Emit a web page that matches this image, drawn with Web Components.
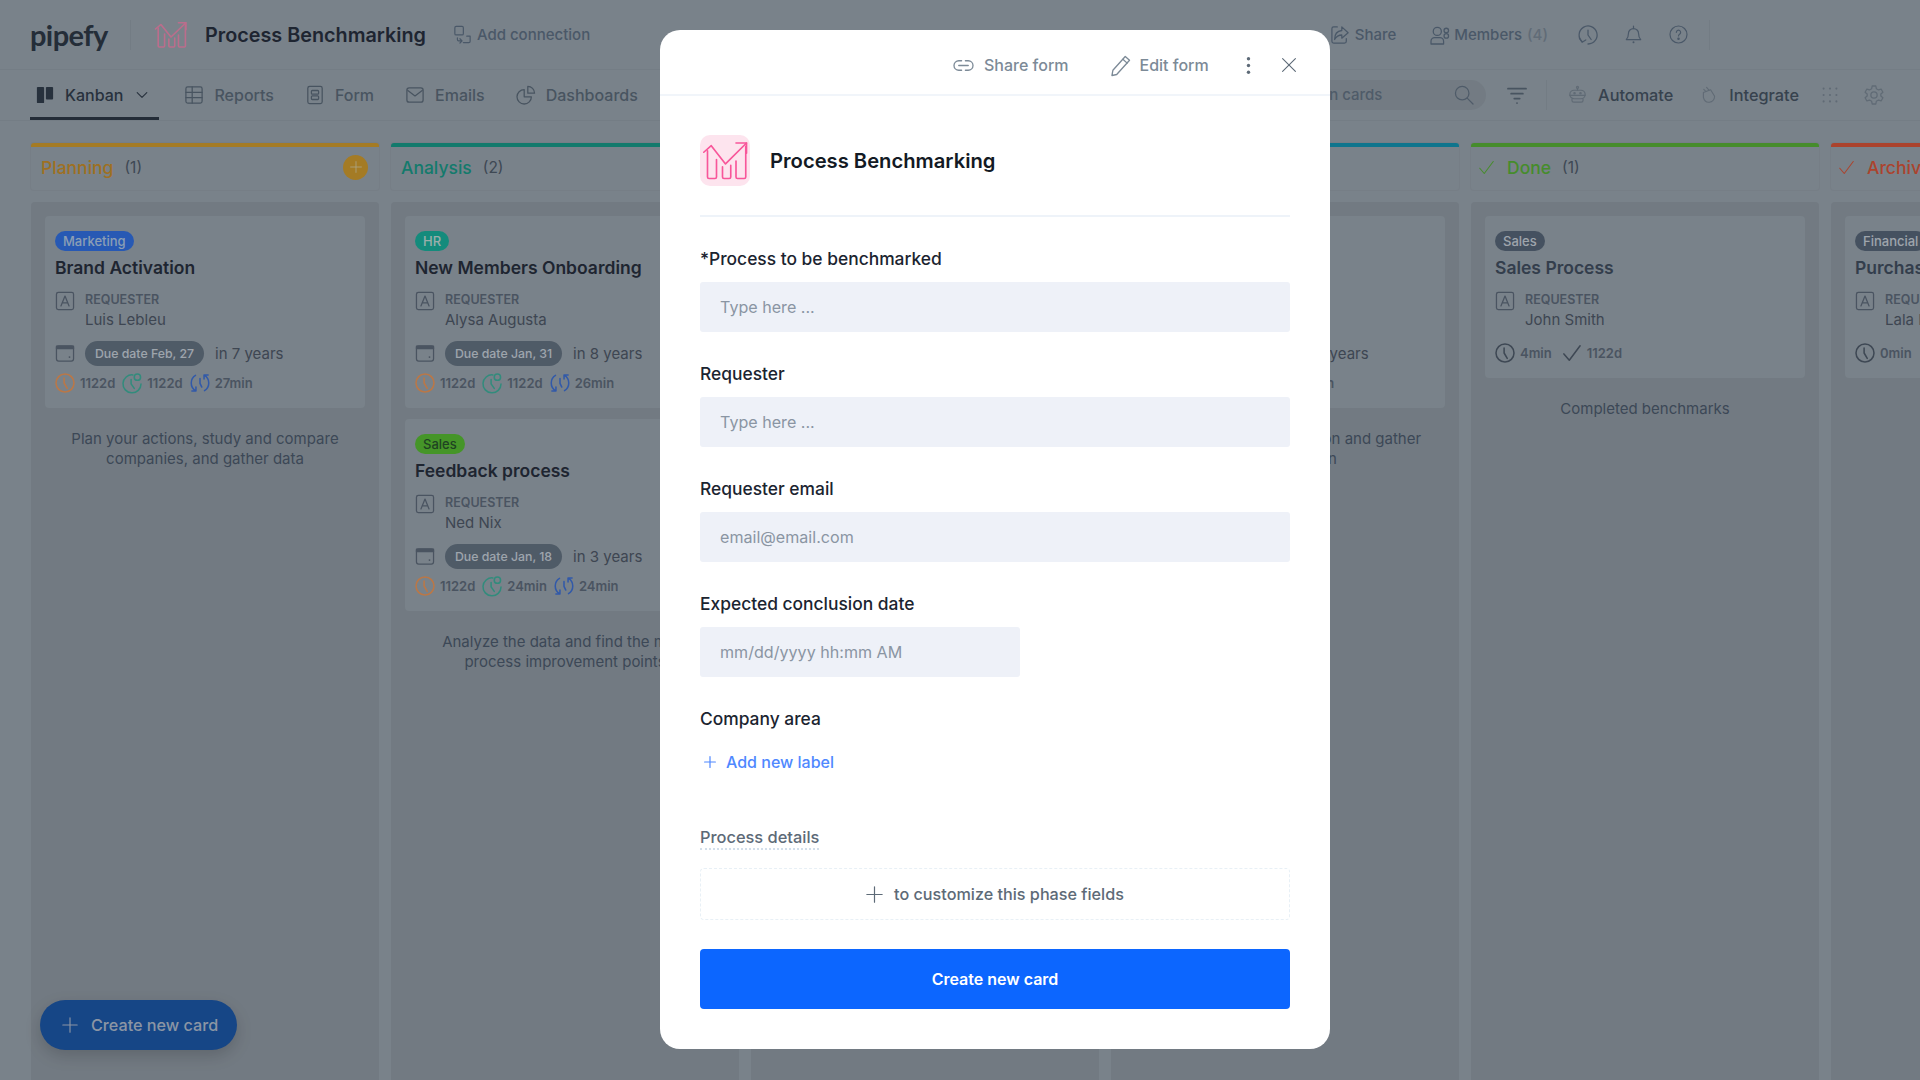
<!DOCTYPE html>
<html lang="en">
<head>
<meta charset="utf-8">
<title>Process Benchmarking</title>
<style>
  html, body { margin: 0; height: 100%; overflow: hidden; }
  body { background: #a1a9b0; font-family: Inter, "Noto Sans", sans-serif; color: #1b1f29; }
</style>
</head>
<body>
<pf-app>
  <pf-topbar></pf-topbar>
  <pf-tabs></pf-tabs>
  <pf-board>
    <pf-column name="Planning" count="1" color="#dea020" ink="#d6901a" add desc="Plan your actions, study and compare companies, and gather data">
      <pf-card tag="Marketing" tag-bg="#2c6fec" tag-fg="#bbd2ee" title="Brand Activation" person="Luis Lebleu" due="Due date Feb, 27" rel="in 7 years">
        <pf-metric icon="clock" color="#ff9a4f">1122d</pf-metric>
        <pf-metric icon="clock-dot" color="#3bb79d">1122d</pf-metric>
        <pf-metric icon="cycle" color="#3a6fdd">27min</pf-metric>
      </pf-card>
    </pf-column>
    <pf-column name="Analysis" count="2" color="#0f9e86" desc="Analyze the data and find the main process improvement points">
      <pf-card tag="HR" tag-bg="#10b79d" tag-fg="#d0e8e0" title="New Members Onboarding" person="Alysa Augusta" due="Due date Jan, 31" rel="in 8 years">
        <pf-metric icon="clock" color="#ff9a4f">1122d</pf-metric>
        <pf-metric icon="clock-dot" color="#3bb79d">1122d</pf-metric>
        <pf-metric icon="cycle" color="#3a6fdd">26min</pf-metric>
      </pf-card>
      <pf-card tag="Sales" tag-bg="#57c524" tag-fg="#1f4f1c" title="Feedback process" person="Ned Nix" due="Due date Jan, 18" rel="in 3 years">
        <pf-metric icon="clock" color="#ff9a4f">1122d</pf-metric>
        <pf-metric icon="clock-dot" color="#3bb79d">24min</pf-metric>
        <pf-metric icon="cycle" color="#3a6fdd">24min</pf-metric>
      </pf-card>
    </pf-column>
    <pf-column name="Benchmarking" count="1" color="#0a97b5" desc="Compare the results with the market">
      <pf-card tag="Sales" tag-bg="#57c524" tag-fg="#1f4f1c" title="Sales review" person="Ned Nix" due="Due date Jan, 18" rel="in 3 years">
        <pf-metric icon="clock" color="#ff9a4f">1122d</pf-metric>
      </pf-card>
    </pf-column>
    <pf-column name="Execution" count="1" color="#0a97b5" desc="Evaluate all the information and gather<br>the conclusion">
      <pf-card tag="Sales" tag-bg="#57c524" tag-fg="#1f4f1c" title="Customer support" person="Ned Nix" due="Due date Jan, 18" rel="in 10 years">
        <pf-metric icon="clock" color="#ff9a4f">1122d</pf-metric>
        <pf-metric icon="clock-dot" color="#3bb79d">1122d</pf-metric>
        <pf-metric icon="cycle" color="#3a6fdd">24min</pf-metric>
      </pf-card>
    </pf-column>
    <pf-column name="Done" count="1" color="#58b82a" done desc="Completed benchmarks">
      <pf-card tag="Sales" tag-bg="#576474" tag-fg="#d6dbe1" title="Sales Process" person="John Smith" muted>
        <pf-metric icon="clock" color="#4c5663">4min</pf-metric>
        <pf-metric icon="check" color="#4c5663" style="margin-left:3px">1122d</pf-metric>
      </pf-card>
    </pf-column>
    <pf-column name="Archived" count="1" color="#e8502c" done desc="Archived benchmarks">
      <pf-card tag="Financial" tag-bg="#576474" tag-fg="#d6dbe1" title="Purchase Process" person="Lala Lima" muted>
        <pf-metric icon="clock" color="#4c5663">0min</pf-metric>
      </pf-card>
    </pf-column>
  </pf-board>
  <pf-fab>Create new card</pf-fab>
</pf-app>

<pf-modal>
  <pf-field label="*Process to be benchmarked" placeholder="Type here ..."></pf-field>
  <pf-field label="Requester" placeholder="Type here ..."></pf-field>
  <pf-field label="Requester email" placeholder="email@email.com"></pf-field>
  <pf-field label="Expected conclusion date" placeholder="mm/dd/yyyy hh:mm AM" narrow></pf-field>
</pf-modal>

<script>
// --- Icons: one table, every shadow root draws from it ---
const ICONS = {
  kanban: '<rect x="3" y="3" width="8" height="18" rx="1" fill="currentColor" stroke="none"/><rect x="13" y="3" width="8" height="14" rx="1" fill="currentColor" stroke="none"/>',
  table: '<rect x="3" y="3" width="18" height="18" rx="2"/><path d="M3 9h18M3 15h18M10 3v18"/>',
  form: '<rect x="4" y="2.5" width="16" height="19" rx="2"/><rect x="8" y="7" width="8" height="4" rx="1"/><rect x="8" y="13" width="8" height="4" rx="1"/>',
  mail: '<rect x="3" y="4" width="18" height="16" rx="2.5"/><path d="M4 7l8 6 8-6"/>',
  pie: '<path d="M10 6a8 8 0 1 0 8 8h-8z"/><path d="M14 2.5a7.500 7.500 0 0 1 7.500 7.500H14z"/>',
  chevron: '<path d="M6 9l6 6 6-6"/>',
  connect: '<rect x="3" y="2.5" width="10" height="10" rx="1.5"/><path d="M21 14v6a1.5 1.5 0 0 1-1.5 1.5H13M17 14h4M6 16v2a1.5 1.5 0 0 0 1.5 1.5H11M9 17l2.500 2.500L9 22"/>',
  share: '<path d="M9 3H5a2 2 0 0 0-2 2v14a2 2 0 0 0 2 2h12a2 2 0 0 0 2-2v-3"/><path d="M14 3l7 6.500-7 6V12c-4 0-6 1.500-8 5 0-6 3-9.500 8-10z"/>',
  members: '<circle cx="9" cy="8" r="4.500"/><path d="M2 22v-3a4 4 0 0 1 4-4h6a4 4 0 0 1 4 4v3z"/><circle cx="19" cy="7" r="2.500"/><circle cx="19" cy="13" r="2.500"/>',
  history: '<path d="M5.500 19.500A10 10 0 1 1 12 22"/><path d="M12 6.500V12l3.500 5M2.500 15.500l3 4.500 4-2.500"/>',
  bell: '<path d="M3.500 18c2-2 2.500-4 2.500-7a6 6 0 0 1 12 0c0 3 .5 5 2.500 7z"/><path d="M12 2v3"/><circle cx="12" cy="21" r="1.200" fill="currentColor" stroke="none"/>',
  help: '<circle cx="12" cy="12" r="10"/><path d="M9.500 9.500a2.500 2.500 0 1 1 3.800 2.100c-.9.600-1.300 1-1.300 2.100"/><circle cx="12" cy="17" r=".8" fill="currentColor"/>',
  search: '<circle cx="10" cy="10" r="7.500"/><path d="M15.500 15.500L22 22"/>',
  filter: '<path d="M2 5h20M5.500 10.500h13M9 16h6" stroke-width="2"/><circle cx="12" cy="21" r="1" fill="currentColor" stroke="none"/>',
  robot: '<circle cx="12" cy="3.500" r="1.200"/><path d="M12 4.700V7"/><rect x="3" y="7" width="18" height="10" rx="5"/><path d="M3 13h18"/><path d="M5.500 17.500v1.500a2 2 0 0 0 2 2h9a2 2 0 0 0 2-2v-1.500"/><circle cx="8.500" cy="10.500" r=".8" fill="currentColor"/><circle cx="15.500" cy="10.500" r=".8" fill="currentColor"/>',
  plug: '<path d="M9 2.500l3 3.500"/><path d="M5 9l9-3.500 5 8c0 4-3 7-6.500 7.500S6 19 5 15z"/><path d="M5.500 5l2.500 2.500"/>',
  grid: '<g fill="currentColor" stroke="none"><circle cx="4" cy="4" r="1.300"/><circle cx="12" cy="4" r="1.300"/><circle cx="20" cy="4" r="1.300"/><circle cx="4" cy="12" r="1.300"/><circle cx="12" cy="12" r="1.300"/><circle cx="20" cy="12" r="1.300"/><circle cx="4" cy="20" r="1.300"/><circle cx="12" cy="20" r="1.300"/><circle cx="20" cy="20" r="1.300"/></g>',
  gear: '<circle cx="12" cy="12" r="3.500"/><path d="M10 2h4l.6 3 2.400 1.400 2.900-1 2 3.500-2.300 2v2.200l2.300 2-2 3.500-2.900-1L14.600 19l-.6 3h-4l-.6-3L7 17.600l-2.900 1-2-3.500 2.300-2v-2.200l-2.300-2 2-3.500 2.900 1L9.400 5z"/>',
  plus: '<path d="M12 3v18M3 12h18"/>',
  check: '<path d="M3 13l6 7L21 4"/>',
  letter: '<rect x="2.500" y="2.500" width="19" height="19" rx="2"/><path d="M7.500 17.500L12 6.500l4.500 11M9 14h6"/>',
  calendar: '<rect x="2.500" y="4" width="19" height="17" rx="2.500"/><path d="M2.500 4.500h19V7h-19z" fill="currentColor"/><circle cx="17" cy="16.500" r="1" fill="currentColor" stroke="none"/>',
  clock: '<circle cx="12" cy="12" r="10"/><path d="M11 6.500V12l3.500 6"/>',
  'clock-dot': '<path d="M13 3A10 10 0 1 0 22 13"/><circle cx="18" cy="5.500" r="3.500"/><path d="M11 8v5l3.500 5"/>',
  cycle: '<path d="M7 3.500A10 10 0 0 0 7 20.500M3 21h4.500v-4.500"/><path d="M17 20.500A10 10 0 0 0 17 3.500M21 3h-4.500v4.500"/><path d="M12 7v5.500l2 4"/>',
  link: '<path d="M10 7H7a5 5 0 0 0 0 10h3M14 7h3a5 5 0 0 1 0 10h-3M7 12h10"/>',
  pencil: '<path d="M17 2.500l4.500 4L8 21.500 3 22.500l1-5.500z"/><path d="M14.500 5.500l4.500 4"/>',
  dots: '<g fill="currentColor" stroke="none"><circle cx="12" cy="4" r="2"/><circle cx="12" cy="12" r="2"/><circle cx="12" cy="20" r="2"/></g>',
  close: '<path d="M4 4l16 16M20 4L4 20"/>',
  benchmark: '<path d="M.5 7L5.500 2.500 15 15 29 .7"/><path d="M22 .7h7v7"/><path d="M3 6v18a1 1 0 0 0 1 1h4a1 1 0 0 0 1-1V12M13 17v7a1 1 0 0 0 1 1h3.500a1 1 0 0 0 1-1v-8M22 13v11a1 1 0 0 0 1 1h4.500a1 1 0 0 0 1-1V3"/>'
};

// --- Component: inline svg icon, picked by name ---
class PfIcon extends HTMLElement {
  connectedCallback() {
    const size = this.getAttribute('size') || 18;
    const height = this.getAttribute('height') || size;
    const stroke = this.getAttribute('stroke') || 1.4;
    const view = this.getAttribute('view') || '2 2 20 20';
    const name = this.getAttribute('name');
    this.attachShadow({ mode: 'open' }).innerHTML = `
      <style>:host { display: inline-flex; flex: none; line-height: 0; } svg { display: block; overflow: visible; }</style>
      <svg width="${size}" height="${height}" viewBox="${view}" preserveAspectRatio="none" fill="none" stroke="currentColor"
           stroke-width="${stroke}" stroke-linecap="round" stroke-linejoin="round">${ICONS[name] || ''}</svg>`;
  }
}
customElements.define('pf-icon', PfIcon);

// --- Component: page frame ---
class PfApp extends HTMLElement {
  constructor() {
    super();
    this.attachShadow({ mode: 'open' }).innerHTML = `
      <style>
        :host { display: flex; flex-direction: column; height: 1080px; width: 1920px; overflow: hidden; position: relative; }
      </style>
      <slot></slot>`;
  }
}
customElements.define('pf-app', PfApp);

// --- Component: top bar with logo and pipe name ---
class PfTopbar extends HTMLElement {
  constructor() {
    super();
    this.attachShadow({ mode: 'open' }).innerHTML = `
      <style>
        :host { display: flex; align-items: center; height: 70px; flex: none; box-sizing: border-box; padding: 0 30px; border-bottom: 1px solid #9aa2a9; color: #5e6e80; font-size: 15px; font-weight: 500; }
        .logo { font: 700 29px/1 Lato, Inter, sans-serif; letter-spacing: -.6px; color: #27303c; width: 78px; }
        .sep { width: 1px; height: 30px; background: #99a1a8; margin: 0 24px 0 22px; }
        h1 { margin: 0 0 0 18px; font-size: 19.8px; line-height: 26px; font-weight: 600; color: #1f2531; white-space: nowrap; }
        .item { display: flex; align-items: center; gap: 6px; white-space: nowrap; }
        .add { margin-left: 28px; }
        .right { margin-left: auto; display: flex; align-items: center; }
        .count { color: #7e8a96; }
        .sep2 { width: 1px; height: 30px; background: #99a1a8; margin-left: 22px; margin-right: 180px; }
        .bench { color: #ff8cb3; }
      </style>
      <span class="logo">pipefy</span>
      <span class="sep"></span>
      <pf-icon class="bench" name="benchmark" view="0 0 30 26" size="32" height="26" stroke="1.500"></pf-icon>
      <h1>Process Benchmarking</h1>
      <span class="item add"><pf-icon name="connect" size="17"></pf-icon>Add connection</span>
      <div class="right">
        <span class="item"><pf-icon name="share" size="18"></pf-icon>Share</span>
        <span class="item" style="margin-left:35px;gap:5px"><pf-icon name="members" size="18"></pf-icon>Members<span class="count">(4)</span></span>
        <pf-icon name="history" size="18" style="margin-left:31px"></pf-icon>
        <pf-icon name="bell" size="17" style="margin-left:28px"></pf-icon>
        <pf-icon name="help" size="17" style="margin-left:28px"></pf-icon>
        <span class="sep2"></span>
      </div>`;
  }
}
customElements.define('pf-topbar', PfTopbar);

// --- Component: view tabs and board tools ---
class PfTabs extends HTMLElement {
  constructor() {
    super();
    this.attachShadow({ mode: 'open' }).innerHTML = `
      <style>
        :host { display: flex; align-items: stretch; height: 51px; flex: none; box-sizing: border-box; padding: 0 37px 0 30px; border-bottom: 1px solid #9aa2a9; font-size: 16px; font-weight: 500; color: #5b6875; }
        .tab { display: flex; align-items: center; gap: 11px; margin-right: 32px; padding-bottom: 1px; white-space: nowrap; }
        .active { color: #2c3643; padding: 0 9px 1px 6px; margin-right: 26px; box-shadow: inset 0 -3px 0 #27303c; }
        .tools { margin-left: auto; display: flex; align-items: center; padding-bottom: 1px; }
        .search { display: flex; align-items: center; width: 260px; height: 30px; box-sizing: border-box; padding: 0 13px 0 45px; border-radius: 15px; background: #98a0a7; font-size: 15px; color: #657281; justify-content: space-between; }
        .sep { width: 1px; height: 30px; background: #99a1a8; margin: 0 22px 0 20px; }
        .tool { display: flex; align-items: center; gap: 12px; color: #434e5b; white-space: nowrap; font-size: 16.3px; }
        .dim { color: #7d8893; }
      </style>
      <span class="tab active"><pf-icon name="kanban" size="18"></pf-icon>Kanban<pf-icon name="chevron" size="16"></pf-icon></span>
      <span class="tab"><pf-icon name="table" size="18"></pf-icon>Reports</span>
      <span class="tab"><pf-icon name="form" size="18"></pf-icon>Form</span>
      <span class="tab"><pf-icon name="mail" size="18"></pf-icon>Emails</span>
      <span class="tab"><pf-icon name="pie" size="18"></pf-icon>Dashboards</span>
      <div class="tools">
        <div class="search"><span>Search in cards</span><pf-icon name="search" size="18"></pf-icon></div>
        <pf-icon name="filter" size="18" style="margin-left:22px"></pf-icon>
        <span class="sep"></span>
        <span class="tool"><pf-icon class="dim" name="robot" size="17"></pf-icon>Automate</span>
        <span class="tool" style="margin-left:28px"><pf-icon class="dim" name="plug" size="16"></pf-icon>Integrate</span>
        <pf-icon class="dim" name="grid" size="16" style="margin-left:23px"></pf-icon>
        <pf-icon class="dim" name="gear" size="18" style="margin-left:27px"></pf-icon>
      </div>`;
  }
}
customElements.define('pf-tabs', PfTabs);

// --- Component: row of phases ---
class PfBoard extends HTMLElement {
  constructor() {
    super();
    this.attachShadow({ mode: 'open' }).innerHTML = `
      <style>:host { display: flex; gap: 12px; flex: 1; min-height: 0; padding: 22px 0 0 31px; overflow: hidden; }</style>
      <slot></slot>`;
  }
}
customElements.define('pf-board', PfBoard);

// --- Component: one phase of the board ---
class PfColumn extends HTMLElement {
  connectedCallback() {
    const color = this.getAttribute('color');
    const ink = this.getAttribute('ink') || color;
    const done = this.hasAttribute('done');
    const add = this.hasAttribute('add');
    this.attachShadow({ mode: 'open' }).innerHTML = `
      <style>
        :host { display: flex; flex-direction: column; flex: none; width: 348px; gap: 12px; }
        header { display: flex; align-items: center; height: 47px; box-sizing: border-box; padding: 0 10px 3px; border-top: 4px solid ${color}; border-radius: 3px; background: #a1a9b0; box-shadow: 0 0 0 1px #9ca4ab; }
        .name { font-size: 17.5px; font-weight: 500; color: ${ink}; }
        .count { margin-left: 11px; font-size: 15.5px; color: #4c5663; }
        .tick { color: ${color}; margin: 0 13px 0 -2px; }
        .add { margin-left: auto; margin-right: 1px; width: 25px; height: 25px; border-radius: 50%; background: ${color}; color: #e8d9a8; display: flex; align-items: center; justify-content: center; }
        .body { flex: 1; display: flex; flex-direction: column; gap: 11px; padding: 14px 14px; border-radius: 4px 4px 0 0; background: #979ea5; }
        p { margin: 10px 8px 0; text-align: center; font-size: 15px; line-height: 20px; color: #4a5667; }
      </style>
      <header>
        ${done ? '<pf-icon class="tick" name="check" size="15"></pf-icon>' : ''}
        <span class="name">${this.getAttribute('name')}</span>
        <span class="count">(${this.getAttribute('count')})</span>
        ${add ? '<span class="add"><pf-icon name="plus" size="12"></pf-icon></span>' : ''}
      </header>
      <div class="body">
        <slot></slot>
        <p>${this.getAttribute('desc')}</p>
      </div>`;
  }
}
customElements.define('pf-column', PfColumn);

// --- Component: card in a phase ---
class PfCard extends HTMLElement {
  connectedCallback() {
    const attr = n => this.getAttribute(n);
    const due = attr('due');
    const muted = this.hasAttribute('muted');
    this.attachShadow({ mode: 'open' }).innerHTML = `
      <style>
        :host { display: block; box-sizing: border-box; padding: 15px 10px 14px; border-radius: 4px; background: #a1a9b0; }
        .tag { display: inline-block; height: 20px; padding: 0 8px; border-radius: 10px; font-size: 13px; line-height: 20px; font-weight: 500; vertical-align: top; background: ${attr('tag-bg')}; color: ${attr('tag-fg')}; }
        h3 { margin: 5px 0 11px; font-size: 17.5px; line-height: 24px; font-weight: 600; color: ${muted ? '#3d4858' : '#1f2531'}; white-space: nowrap; }
        .req { display: grid; grid-template-columns: 30px auto; color: #5e6876; }
        .req pf-icon { margin: 1px 0 0 1px; grid-row: span 2; }
        .lab { font-size: 12.5px; line-height: 18px; font-weight: 600; height: 18px; }
        .who { grid-column: 2; font-size: 15px; line-height: 22px; color: #4c5360; white-space: nowrap; }
        .due { display: flex; align-items: center; margin-top: 9px; height: 26px; color: #5e6876; }
        .due pf-icon { margin-left: 1px; }
        .pill { margin-left: 11px; padding: 0 10px; height: 25px; border-radius: 13px; background: #65727f; color: #d6dbe1; font-size: 12.3px; line-height: 25px; font-weight: 500; white-space: nowrap; }
        .rel { margin-left: 11px; font-size: 15px; color: #4c5360; white-space: nowrap; }
        .metrics { display: flex; align-items: center; gap: 8px; margin-top: 6px; height: 22px; padding-left: 1px; }
      </style>
      <span class="tag">${attr('tag')}</span>
      <h3>${attr('title')}</h3>
      <div class="req">
        <pf-icon name="letter" size="18"></pf-icon><span class="lab">REQUESTER</span>
        <span class="who">${attr('person')}</span>
      </div>
      ${due ? `<div class="due"><pf-icon name="calendar" size="18"></pf-icon><span class="pill">${due}</span><span class="rel">${attr('rel')}</span></div>` : ''}
      <div class="metrics" style="${due ? '' : 'margin-top:11px'}"><slot></slot></div>`;
  }
}
customElements.define('pf-card', PfCard);

// --- Component: small timer beside a coloured icon ---
class PfMetric extends HTMLElement {
  connectedCallback() {
    this.attachShadow({ mode: 'open' }).innerHTML = `
      <style>
        :host { display: inline-flex; align-items: center; gap: 6px; font-size: 13px; font-weight: 600; color: #5e6876; white-space: nowrap; }
        pf-icon { color: ${this.getAttribute('color')}; }
      </style>
      <pf-icon name="${this.getAttribute('icon')}" size="18" stroke="1.700"></pf-icon><slot></slot>`;
  }
}
customElements.define('pf-metric', PfMetric);

// --- Component: floating create button ---
class PfFab extends HTMLElement {
  constructor() {
    super();
    this.attachShadow({ mode: 'open' }).innerHTML = `
      <style>
        :host { position: absolute; left: 40px; top: 1000px; display: flex; align-items: center; gap: 13px; width: 197px; height: 50px; box-sizing: border-box; padding: 0 19px 0 22px; border-radius: 25px; background: #1453ab; color: #bbc5d6; font-size: 16.2px; font-weight: 500; white-space: nowrap; box-shadow: 0 6px 16px rgba(0,0,0,.18); }
      </style>
      <pf-icon name="plus" size="16"></pf-icon><slot></slot>`;
  }
}
customElements.define('pf-fab', PfFab);

// --- Component: labelled form field ---
class PfField extends HTMLElement {
  connectedCallback() {
    const narrow = this.hasAttribute('narrow');
    this.attachShadow({ mode: 'open' }).innerHTML = `
      <style>
        :host { display: block; margin-bottom: 30px; }
        label { display: block; margin-bottom: 11px; font-size: 17.4px; line-height: 24px; font-weight: 500; color: #1b2430; }
        .input { width: ${narrow ? '320px' : '100%'}; height: 50px; box-sizing: border-box; padding: 0 20px; display: flex; align-items: center; border-radius: 3px; background: #eef1f8; color: #8a95a3; font-size: 16.1px; }
      </style>
      <label>${this.getAttribute('label')}</label>
      <div class="input">${this.getAttribute('placeholder')}</div>`;
  }
}
customElements.define('pf-field', PfField);

// --- Component: scrim and new card dialog ---
class PfModal extends HTMLElement {
  constructor() {
    super();
    this.attachShadow({ mode: 'open' }).innerHTML = `
      <style>
        :host { position: fixed; inset: 0; background: rgba(30,40,50,.3); }
        .dialog { position: absolute; left: 660px; top: 30px; width: 670px; height: 1019px; box-sizing: border-box; border-radius: 20px; background: #fff; display: flex; flex-direction: column; }
        .head { display: flex; align-items: center; height: 66px; flex: none; box-sizing: border-box; padding: 6px 0 0 294px; border-bottom: 2px solid #f1f5fa; color: #7c8a97; font-size: 16px; font-weight: 500; }
        .head span { display: flex; align-items: center; white-space: nowrap; }
        .body { padding: 0 40px; display: flex; flex-direction: column; flex: 1; }
        .title { display: flex; align-items: center; gap: 20px; padding: 39px 0 29px; border-bottom: 2px solid #eef3f9; margin-bottom: 30px; }
        .badge { width: 50px; height: 51px; border-radius: 10px; background: #fde4ee; color: #f8569a; display: flex; align-items: center; justify-content: center; }
        h2 { margin: 0; font-size: 20.2px; line-height: 26px; font-weight: 600; color: #131a24; }
        .label { font-size: 17.4px; line-height: 24px; font-weight: 500; color: #1b2430; }
        .addl { display: flex; align-items: center; gap: 10px; margin: 19px 0 52px 4px; height: 24px; color: #4f88ff; font-size: 16px; font-weight: 500; }
        .sec { align-self: flex-start; font-size: 16.4px; line-height: 22px; font-weight: 500; color: #5d6a77; border-bottom: 2px dotted #d3dfeb; }
        .box { display: flex; align-items: center; justify-content: center; gap: 11px; height: 52px; margin-top: 18px; box-sizing: border-box; border: 1px dashed #e8f0f6; border-radius: 4px; color: #5d6a77; font-size: 16.2px; font-weight: 500; }
        .go { display: flex; align-items: center; justify-content: center; height: 60px; margin-top: 29px; border-radius: 4px; background: #0c66ff; color: #fff; font-size: 16px; font-weight: 600; }
      </style>
      <div class="dialog">
        <div class="head">
          <span><pf-icon name="link" size="19" style="margin-right:11px"></pf-icon>Share form</span>
          <span style="margin-left:42px"><pf-icon name="pencil" size="19" style="margin-right:10px"></pf-icon>Edit form</span>
          <pf-icon name="dots" size="17" style="margin-left:31px;color:#5d6a77"></pf-icon>
          <pf-icon name="close" size="16" style="margin-left:24px;color:#5d6a77"></pf-icon>
        </div>
        <div class="body">
          <div class="title">
            <span class="badge"><pf-icon name="benchmark" view="0 0 30 26" size="45" height="38" stroke="1.100"></pf-icon></span>
            <h2>Process Benchmarking</h2>
          </div>
          <slot></slot>
          <div class="label">Company area</div>
          <div class="addl"><pf-icon name="plus" size="12" stroke="2"></pf-icon>Add new label</div>
          <div class="sec">Process details</div>
          <div class="box"><pf-icon name="plus" size="17"></pf-icon>to customize this phase fields</div>
          <div class="go">Create new card</div>
        </div>
      </div>`;
  }
}
customElements.define('pf-modal', PfModal);
</script>
</body>
</html>
